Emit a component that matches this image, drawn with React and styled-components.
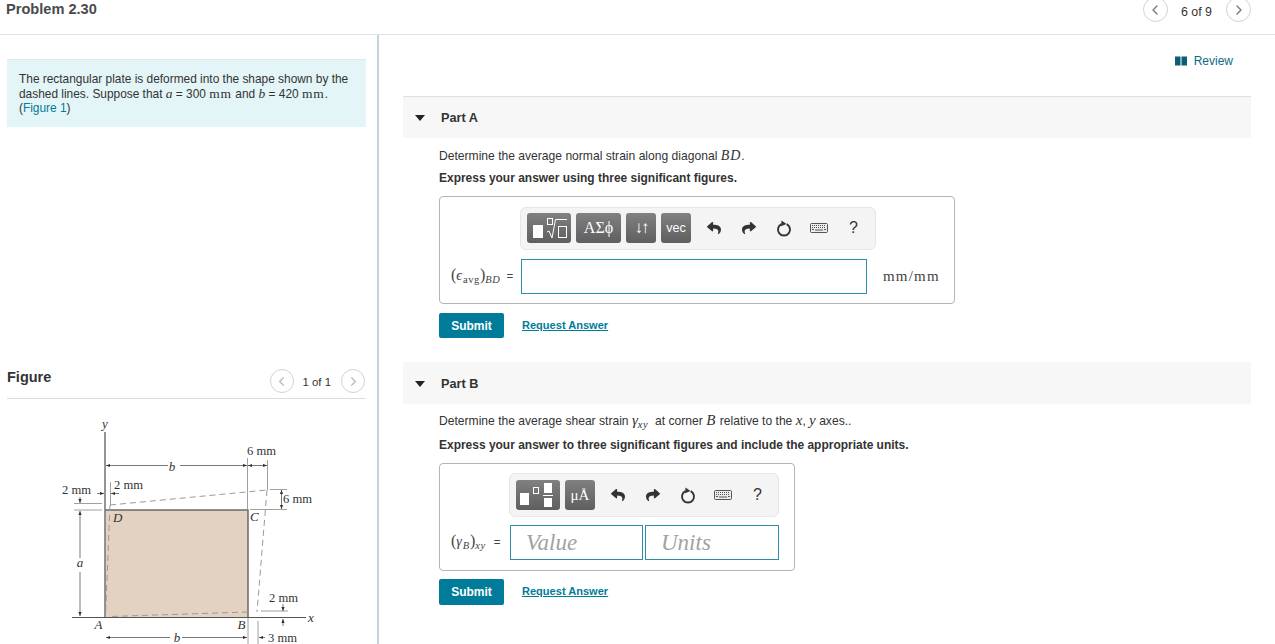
import React from "react";
import styled, {createGlobalStyle} from "styled-components";
import {FaReply, FaShare} from "react-icons/fa";
import {ChevronLeft, ChevronRight} from "lucide-react";

const GlobalStyle = createGlobalStyle`
html, body {
  margin: 0;
  padding: 0;
  height: 644px;
  overflow: hidden;
  background: #fff;
  font-family: "Liberation Sans", Arial, sans-serif;
  color: #333;
}
* { box-sizing: border-box; }
`;

const Page = styled.div`
width: 1275px;
height: 644px;
overflow: hidden;
`;

const Header = styled.header`
height: 35px;
display: flex;
justify-content: space-between;
align-items: flex-start;
padding: 0 24px 0 6px;
border-bottom: 1px solid #e2e2e2;
`;

const Title = styled.h1`
margin: 1px 0 0;
font-size: 14.6px;
line-height: 16px;
font-weight: bold;
color: #4a4a4a;
`;

const Pager = styled.div`
display: flex;
align-items: center;
margin-top: ${props => props.$top || 0}px;
`;

const Round = styled.button`
width: ${props => props.$size}px;
height: ${props => props.$size}px;
padding: 0;
display: flex;
align-items: center;
justify-content: center;
background: #fff;
border: 1px solid #d2d2d2;
border-radius: 50%;
color: ${props => props.$color};
`;

const PagerText = styled.span`
font-size: ${props => props.$font}px;
color: #333;
margin: ${props => props.$margin};
`;

const Columns = styled.main`
display: grid;
grid-template-columns: 379px 1fr;
height: 609px;
`;

const Left = styled.section`
border-right: 2px solid #c3d3df;
padding: 24px 11px 0 7px;
`;

const Info = styled.div`
height: 68px;
padding: 12px 0 0 12px;
background: #e3f5f6;
border-top: 1px solid #dcecee;
font-size: 11.9px;
line-height: 14.5px;
white-space: nowrap;
color: #333;
`;

const FigureLink = styled.span`
color: #007c9a;
`;

const FigureHead = styled.div`
height: 33px;
margin-top: 239px;
display: flex;
justify-content: space-between;
align-items: flex-start;
padding-right: 1px;
border-bottom: 1px solid #dcdcdc;
`;

const FigureTitle = styled.h2`
margin: 3px 0 0;
font-size: 14.5px;
line-height: 16px;
font-weight: bold;
color: #333;
`;

const Drawing = styled.svg`
display: block;
margin: 1px 0 0 -7px;
`;

const Right = styled.section`
padding: 0 24px 0 24px;
`;

const ReviewRow = styled.div`
height: 61px;
display: flex;
justify-content: flex-end;
align-items: flex-start;
gap: 7px;
padding: 19px 18px 0 0;
font-size: 12px;
line-height: 14px;
color: #0a6a84;
`;

const PartHead = styled.div`
height: 42px;
display: flex;
align-items: center;
padding: 1px 0 0 12px;
margin-top: ${props => props.$top || 0}px;
background: #f7f7f7;
border-top: ${props => props.$line ? "1px solid #e0e0e0" : "none"};
font-size: 12.7px;
font-weight: bold;
color: #333;
`;

const Caret = styled.span`
width: 0;
height: 0;
margin-right: 16px;
border-left: 5px solid transparent;
border-right: 5px solid transparent;
border-top: 6px solid #222;
`;

const PartBody = styled.div`
padding-left: 36px;
`;

const Prompt = styled.p`
margin: ${props => props.$top}px 0 0;
font-size: 12.1px;
line-height: 16px;
color: #333;
`;

const Strong = styled(Prompt)`
font-weight: bold;
font-size: 11.97px;
`;

const Math = styled.span`
font-family: "Liberation Serif", "Times New Roman", serif;
font-style: ${props => props.$plain ? "normal" : "italic"};
font-size: ${props => props.$size || 14}px;
letter-spacing: ${props => props.$spaced || 0}px;
line-height: 0;
`;

const Sub = styled.sub`
font-family: "Liberation Serif", serif;
font-style: ${props => props.$plain ? "normal" : "italic"};
font-size: 10.5px;
letter-spacing: 0.6px;
line-height: 0;
vertical-align: -3px;
`;

const Equals = styled.span`
margin-left: ${props => props.$left}px;
font-size: 11.5px;
`;

const AnswerBox = styled.div`
width: ${props => props.$width}px;
height: 108px;
margin-top: ${props => props.$top}px;
padding-top: ${props => props.$pad}px;
border: 1px solid #b4b4b4;
border-radius: 4px;
`;

const Toolbar = styled.div`
width: ${props => props.$width}px;
height: ${props => props.$height}px;
margin-left: ${props => props.$left}px;
display: flex;
align-items: flex-start;
gap: 5px;
padding: ${props => props.$pad}px 0 0 6px;
background: #f4f4f4;
border: 1px solid #e6e6e6;
border-radius: 6px;
`;

const ToolButton = styled.div`
width: ${props => props.$w}px;
height: 30px;
flex: none;
display: flex;
align-items: center;
justify-content: center;
background: linear-gradient(#808080, #5f5f5f);
border-radius: 3px;
color: #fff;
font-family: ${props => props.$serif ? '"Liberation Serif", serif' : '"Liberation Sans", sans-serif'};
font-size: ${props => props.$font || 14}px;
letter-spacing: ${props => props.$spaced || 0}px;
`;

const IconRow = styled.div`
display: flex;
height: 30px;
`;

const IconCell = styled.div`
width: 35px;
height: 30px;
display: flex;
align-items: center;
justify-content: center;
color: #333;
font-size: 16px;
`;

const AnswerRow = styled.div`
display: flex;
align-items: center;
margin-top: ${props => props.$top}px;
`;

const Label = styled.div`
width: ${props => props.$width}px;
padding: 0 0 2px 11px;
white-space: nowrap;
font-size: 11px;
color: #444;
`;

const Field = styled.div`
width: ${props => props.$width}px;
height: ${props => props.$height}px;
margin-right: ${props => props.$gap || 0}px;
display: flex;
align-items: center;
padding-left: 15px;
border: 1.5px solid #2b8fa9;
font-family: "Liberation Serif", serif;
font-style: italic;
font-size: 23px;
color: #a2a2a2;
`;

const Unit = styled.span`
margin-left: 16px;
font-family: "Liberation Serif", serif;
font-size: 15px;
letter-spacing: 1.2px;
color: #444;
`;

const Actions = styled.div`
display: flex;
align-items: center;
gap: 18px;
margin-top: ${props => props.$top}px;
`;

const Submit = styled.button`
width: 65px;
height: ${props => props.$height}px;
padding: 0;
background: #007c9a;
border: none;
border-radius: 2px;
color: #fff;
font-family: "Liberation Sans", sans-serif;
font-size: 12px;
font-weight: bold;
`;

const RequestLink = styled.a`
margin-bottom: 2px;
font-size: 11.05px;
font-weight: bold;
color: #007c9a;
text-decoration: underline;
`;

const BookIcon = () => (
  <svg width="12" height="10" viewBox="0 0 12 10" style={{marginTop: 2}}>
    <path d="M0 0.5h5.5v9H0zM6.5 0.5h5.5v9H6.5z" fill="#0a5f78"/>
  </svg>
);

const RootIcon = () => (
  <svg width="40" height="26" viewBox="0 0 40 26">
    <rect x="4" y="10" width="10" height="13" fill="#fff"/>
    <rect x="18.5" y="3.5" width="5" height="6" fill="none" stroke="#fff"/>
    <path d="M18 17l2 -1 3 7 3.5 -18.5h11.5" fill="none" stroke="#fff"/>
    <rect x="29.5" y="11.5" width="8" height="11" fill="none" stroke="#fff"/>
  </svg>
);

const FractionIcon = () => (
  <svg width="40" height="26" viewBox="0 0 40 26">
    <rect x="2" y="11" width="9" height="12" fill="#fff"/>
    <rect x="15.5" y="5.5" width="5" height="6" fill="none" stroke="#fff"/>
    <rect x="26" y="1" width="8" height="10" fill="#fff"/>
    <rect x="25" y="13" width="10" height="1" fill="#fff"/>
    <rect x="26" y="16" width="8" height="9" fill="#fff"/>
  </svg>
);

const ResetIcon = () => (
  <svg width="16" height="17" viewBox="0 0 16 17">
    <path d="M5.3 4.2a6 6 0 1 0 5.4 0" fill="none" stroke="#333" strokeWidth="1.9"/>
    <path d="M5.5 0.5l5 3.5 -5.5 2.2z" fill="#333"/>
  </svg>
);

const KeyboardIcon = () => (
  <svg width="18" height="10" viewBox="0 0 18 10">
    <rect x="0.5" y="0.5" width="17" height="9" rx="1" fill="#ececec" stroke="#555"/>
    <path d="M2 2.5h14M2 4.5h14" stroke="#555" strokeDasharray="1 1" fill="none"/>
    <path d="M2 6.5h2M14 6.5h2M5 7h8" stroke="#555" fill="none"/>
  </svg>
);

const TailIcons = () => (
  <IconRow>
    <IconCell><FaReply size={14}/></IconCell>
    <IconCell><FaShare size={14}/></IconCell>
    <IconCell><ResetIcon/></IconCell>
    <IconCell><KeyboardIcon/></IconCell>
    <IconCell>?</IconCell>
  </IconRow>
);

const fig = {fontFamily: '"Liberation Serif", serif', fontSize: 12.6, fill: "#333"};
const figItalic = {...fig, fontStyle: "italic", fontSize: 13};

// plate drawing, coordinates are read off the figure
const PlateFigure = () => (
  <Drawing width="370" height="244" viewBox="0 0 370 244">
    <defs>
      <marker id="tip" markerWidth="6" markerHeight="6" refX="5" refY="2.5" orient="auto-start-reverse">
        <path d="M0 0.5L5 2.5L0 4.5z" fill="#333"/>
      </marker>
    </defs>
    <rect x="105" y="110" width="143" height="107" fill="#e3d2c2"/>
    <path d="M105 110H248V217" fill="none" stroke="#6e6a66" strokeWidth="1.5"/>
    <path d="M105 32V217" stroke="#7a7a7a" strokeWidth="1.6"/>
    <path d="M72 217.5H306" stroke="#555" strokeWidth="1"/>
    <g fill="none" stroke="#999" strokeWidth="1" strokeDasharray="6 4">
      <path d="M110 105L267 90"/>
      <path d="M267 90L257 212"/>
      <path d="M248 212L110 216.5"/>
      <path d="M110 105L105.5 217"/>
    </g>
    <g fill="none" stroke="#888" strokeWidth="0.8">
      <path d="M247.5 58V110M267.5 60V90M248 218V244M258 221V244"/>
      <path d="M270 89.5H287M250 109.5H287M261 211H288"/>
      <path d="M74 103.5H102M74 110H102M110.5 82V105"/>
    </g>
    <g fill="none" stroke="#555" strokeWidth="0.8" markerEnd="url(#tip)">
      <path d="M168 65.5H106"/>
      <path d="M180 65.5H247"/>
      <path d="M248 65.5H267" markerStart="url(#tip)"/>
      <path d="M281.5 90V109" markerStart="url(#tip)"/>
      <path d="M80 158V111"/>
      <path d="M80 172V216"/>
      <path d="M80 97V103"/>
      <path d="M97 93.5H104"/>
      <path d="M119 93.5H111"/>
      <path d="M283 204V211"/>
      <path d="M283 226V219"/>
      <path d="M170 237.5H106"/>
      <path d="M182 237.5H247"/>
      <path d="M265 237.5H259"/>
    </g>
    <text x="105" y="28" textAnchor="middle" style={figItalic}>y</text>
    <text x="308" y="222" style={figItalic}>x</text>
    <text x="172" y="71" textAnchor="middle" style={figItalic}>b</text>
    <text x="177" y="242" textAnchor="middle" style={figItalic}>b</text>
    <text x="80" y="167" textAnchor="middle" style={figItalic}>a</text>
    <text x="113" y="122" style={figItalic}>D</text>
    <text x="250" y="121" style={figItalic}>C</text>
    <text x="94.5" y="229" style={figItalic}>A</text>
    <text x="237.5" y="229" style={figItalic}>B</text>
    <text x="247" y="55" style={fig}>6 mm</text>
    <text x="283" y="103" style={fig}>6 mm</text>
    <text x="62" y="94" style={fig}>2 mm</text>
    <text x="114" y="89" style={fig}>2 mm</text>
    <text x="269" y="202" style={fig}>2 mm</text>
    <text x="268" y="242" style={fig}>3 mm</text>
  </Drawing>
);

export default function App() {
  return (
    <Page>
      <GlobalStyle/>
      <Header>
        <Title>Problem 2.30</Title>
        <Pager $top={-3}>
          <Round $size={25} $color="#777"><ChevronLeft size={16}/></Round>
          <PagerText $font={12.4} $margin="4px 14px 0 13px">6 of 9</PagerText>
          <Round $size={25} $color="#777"><ChevronRight size={16}/></Round>
        </Pager>
      </Header>
      <Columns>
        <Left>
          <Info>
            The rectangular plate is deformed into the shape shown by the
            <br/>
            dashed lines. Suppose that <Math $size={13.5}>a</Math> = 300 <Math $plain $size={13.5} $spaced={0.9}>mm</Math> and <Math $size={13.5}>b</Math> = 420 <Math $plain $size={13.5} $spaced={0.9}>mm</Math>.
            <br/>
            (<FigureLink>Figure 1</FigureLink>)
          </Info>
          <FigureHead>
            <FigureTitle>Figure</FigureTitle>
            <Pager $top={3}>
              <Round $size={24} $color="#bbb"><ChevronLeft size={15}/></Round>
              <PagerText $font={11.4} $margin="2px 10px 0 9px">1 of 1</PagerText>
              <Round $size={24} $color="#bbb"><ChevronRight size={15}/></Round>
            </Pager>
          </FigureHead>
          <PlateFigure/>
        </Left>
        <Right>
          <ReviewRow><BookIcon/>Review</ReviewRow>

          <PartHead $line><Caret/>Part A</PartHead>
          <PartBody>
            <Prompt $top={10}>Determine the average normal strain along diagonal <Math $spaced={1}>BD</Math>.</Prompt>
            <Strong $top={6}>Express your answer using three significant figures.</Strong>
            <AnswerBox $width={516} $top={10} $pad={10}>
              <Toolbar $width={356} $height={43} $left={80} $pad={5}>
                <ToolButton $w={44}><RootIcon/></ToolButton>
                <ToolButton $w={45} $serif $font={16}>ΑΣϕ</ToolButton>
                <ToolButton $w={30} $serif $font={17} $spaced={-2}>↓↑</ToolButton>
                <ToolButton $w={30} $font={12.5}>vec</ToolButton>
                <TailIcons/>
              </Toolbar>
              <AnswerRow $top={9}>
                <Label $width={81}>
                  <Math $plain $size={16}>(</Math><Math $spaced={1}>ϵ</Math><Sub $plain>avg</Sub><Math $plain $size={16}>)</Math><Sub>BD</Sub><Equals $left={6}>=</Equals>
                </Label>
                <Field $width={346} $height={35}/>
                <Unit>mm/mm</Unit>
              </AnswerRow>
            </AnswerBox>
            <Actions $top={9}>
              <Submit $height={25}>Submit</Submit>
              <RequestLink>Request Answer</RequestLink>
            </Actions>
          </PartBody>

          <PartHead $top={24}><Caret/>Part B</PartHead>
          <PartBody>
            <Prompt $top={9}>Determine the average shear strain <Math $size={15}>γ</Math><Sub>xy</Sub>&nbsp; at corner <Math $size={15} $spaced={1}>B</Math> relative to the <Math $size={15}>x</Math>, <Math $size={15}>y</Math> axes..</Prompt>
            <Strong $top={8}>Express your answer to three significant figures and include the appropriate units.</Strong>
            <AnswerBox $width={356} $top={10} $pad={9}>
              <Toolbar $width={270} $height={44} $left={69} $pad={6}>
                <ToolButton $w={44}><FractionIcon/></ToolButton>
                <ToolButton $w={30} $serif $font={15}>μÅ</ToolButton>
                <TailIcons/>
              </Toolbar>
              <AnswerRow $top={8}>
                <Label $width={70}>
                  <Math $plain $size={16}>(</Math><Math $spaced={1}>γ</Math><Sub>B</Sub><Math $plain $size={16}>)</Math><Sub>xy</Sub><Equals $left={8}>=</Equals>
                </Label>
                <Field $width={133} $height={35} $gap={2}>Value</Field>
                <Field $width={134} $height={35}>Units</Field>
              </AnswerRow>
            </AnswerBox>
            <Actions $top={8}>
              <Submit $height={26}>Submit</Submit>
              <RequestLink>Request Answer</RequestLink>
            </Actions>
          </PartBody>
        </Right>
      </Columns>
    </Page>
  );
}
